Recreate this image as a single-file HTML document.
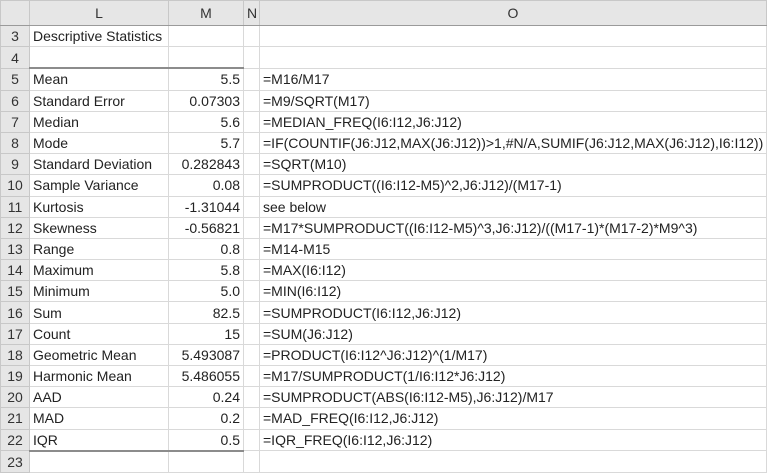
<!DOCTYPE html>
<html><head><style>
body{margin:0;width:768px;height:452px;overflow:hidden;background:#fff;font-family:"Liberation Sans",sans-serif;font-size:14px;color:#222}
table{border-collapse:collapse;table-layout:fixed;position:absolute;left:0;top:0;width:766px}
td{border:1px solid #d9d9d9;padding:0 3px;white-space:nowrap;overflow:visible;height:20.2px;line-height:20px}
tr.h td{background:#e6e6e6;height:24px;text-align:center;color:#333;border-color:#c8c8c8;border-bottom:1px solid #9a9a9a}
td.rh{background:#e6e6e6;text-align:center;color:#333;border-color:#c8c8c8;padding:0}
td.r{text-align:right}
tr.t td.l,tr.t td.r{border-bottom:2px solid #8c8c8c}
tr.b td.l,tr.b td.r{border-bottom:2px solid #8c8c8c}
</style></head><body>
<table>
<colgroup><col style="width:29px"><col style="width:139px"><col style="width:75px"><col style="width:16px"><col style="width:507px"></colgroup>
<tr class="h"><td style="padding:0"></td><td>L</td><td>M</td><td>N</td><td>O</td></tr>
<tr><td class="rh">3</td><td class="l">Descriptive Statistics</td><td class="r"></td><td></td><td></td></tr>
<tr class="t"><td class="rh">4</td><td class="l"></td><td class="r"></td><td></td><td></td></tr>
<tr><td class="rh">5</td><td class="l">Mean</td><td class="r">5.5</td><td></td><td>=M16/M17</td></tr>
<tr><td class="rh">6</td><td class="l">Standard Error</td><td class="r">0.07303</td><td></td><td>=M9/SQRT(M17)</td></tr>
<tr><td class="rh">7</td><td class="l">Median</td><td class="r">5.6</td><td></td><td>=MEDIAN_FREQ(I6:I12,J6:J12)</td></tr>
<tr><td class="rh">8</td><td class="l">Mode</td><td class="r">5.7</td><td></td><td>=IF(COUNTIF(J6:J12,MAX(J6:J12))&gt;1,#N/A,SUMIF(J6:J12,MAX(J6:J12),I6:I12))</td></tr>
<tr><td class="rh">9</td><td class="l">Standard Deviation</td><td class="r">0.282843</td><td></td><td>=SQRT(M10)</td></tr>
<tr><td class="rh">10</td><td class="l">Sample Variance</td><td class="r">0.08</td><td></td><td>=SUMPRODUCT((I6:I12-M5)^2,J6:J12)/(M17-1)</td></tr>
<tr><td class="rh">11</td><td class="l">Kurtosis</td><td class="r">-1.31044</td><td></td><td>see below</td></tr>
<tr><td class="rh">12</td><td class="l">Skewness</td><td class="r">-0.56821</td><td></td><td>=M17*SUMPRODUCT((I6:I12-M5)^3,J6:J12)/((M17-1)*(M17-2)*M9^3)</td></tr>
<tr><td class="rh">13</td><td class="l">Range</td><td class="r">0.8</td><td></td><td>=M14-M15</td></tr>
<tr><td class="rh">14</td><td class="l">Maximum</td><td class="r">5.8</td><td></td><td>=MAX(I6:I12)</td></tr>
<tr><td class="rh">15</td><td class="l">Minimum</td><td class="r">5.0</td><td></td><td>=MIN(I6:I12)</td></tr>
<tr><td class="rh">16</td><td class="l">Sum</td><td class="r">82.5</td><td></td><td>=SUMPRODUCT(I6:I12,J6:J12)</td></tr>
<tr><td class="rh">17</td><td class="l">Count</td><td class="r">15</td><td></td><td>=SUM(J6:J12)</td></tr>
<tr><td class="rh">18</td><td class="l">Geometric Mean</td><td class="r">5.493087</td><td></td><td>=PRODUCT(I6:I12^J6:J12)^(1/M17)</td></tr>
<tr><td class="rh">19</td><td class="l">Harmonic Mean</td><td class="r">5.486055</td><td></td><td>=M17/SUMPRODUCT(1/I6:I12*J6:J12)</td></tr>
<tr><td class="rh">20</td><td class="l">AAD</td><td class="r">0.24</td><td></td><td>=SUMPRODUCT(ABS(I6:I12-M5),J6:J12)/M17</td></tr>
<tr><td class="rh">21</td><td class="l">MAD</td><td class="r">0.2</td><td></td><td>=MAD_FREQ(I6:I12,J6:J12)</td></tr>
<tr class="b"><td class="rh">22</td><td class="l">IQR</td><td class="r">0.5</td><td></td><td>=IQR_FREQ(I6:I12,J6:J12)</td></tr>
<tr><td class="rh">23</td><td></td><td></td><td></td><td></td></tr>
</table>
</body></html>
